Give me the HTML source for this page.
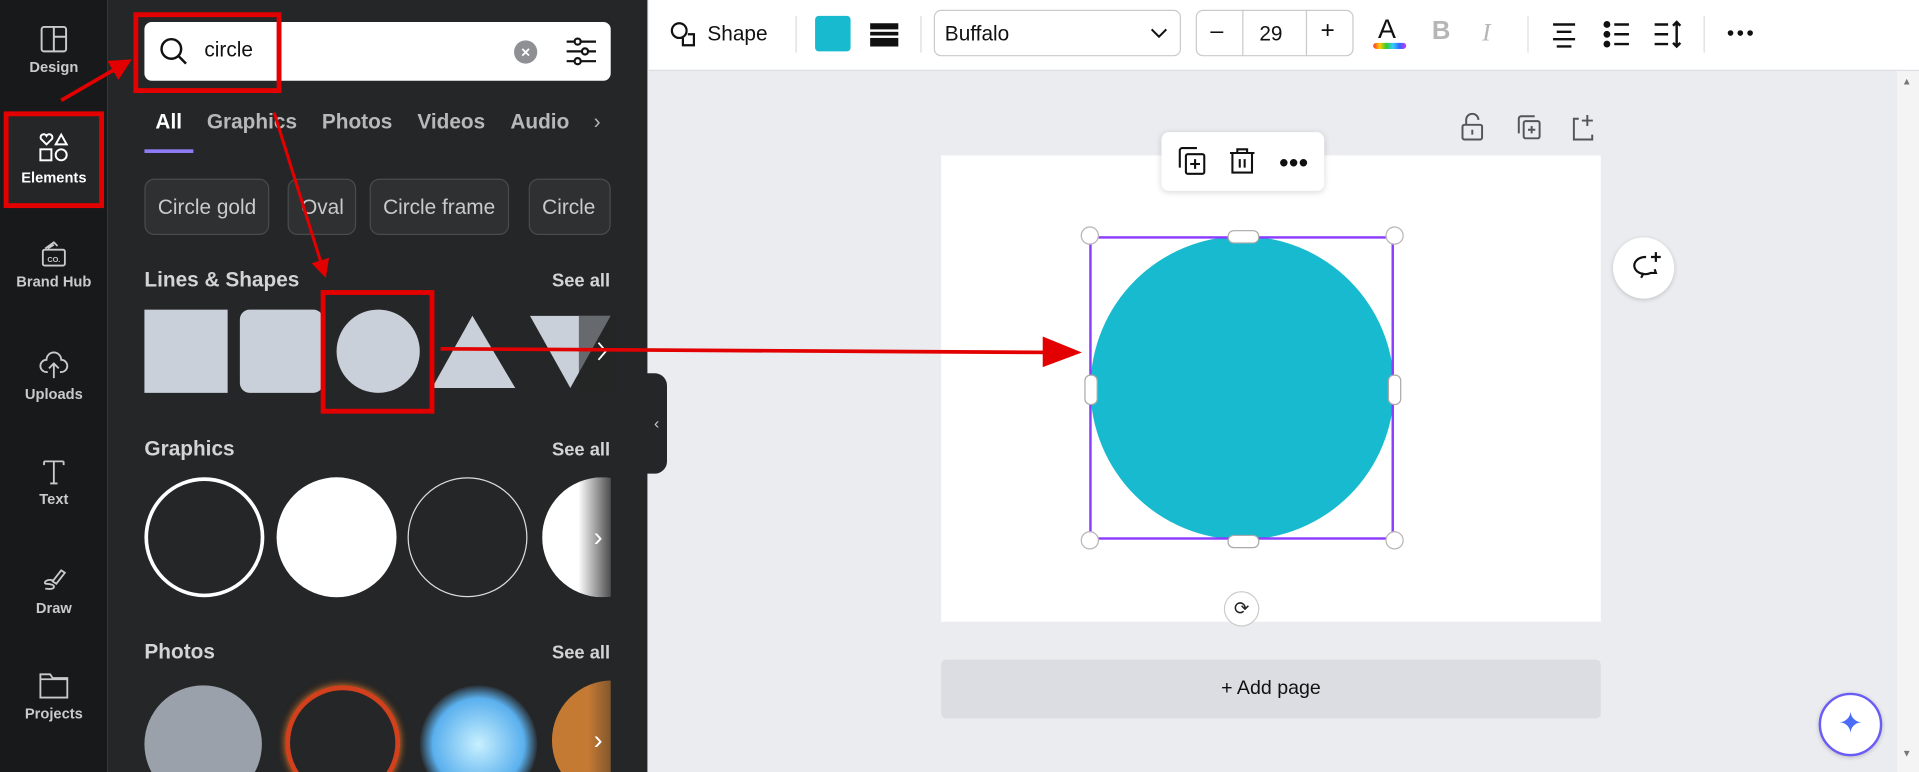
<!DOCTYPE html>
<html><head><meta charset="utf-8">
<style>
html,body{margin:0;padding:0;width:1919px;height:772px;overflow:hidden;background:#ebecf0;font-family:"Liberation Sans",sans-serif}
#w{position:absolute;left:0;top:0;width:1568px;height:631px;transform:scale(1.22385);transform-origin:0 0;background:#ebecf0;overflow:hidden}
.a{position:absolute}
.rail{left:0;top:0;width:88px;height:631px;background:#18191b}
.ri{position:absolute;left:0;width:88px;text-align:center;color:#c9cacc;font-size:12px;font-weight:bold}
.ri svg{display:block;margin:0 auto 4px}
.panel{left:88px;top:0;width:441px;height:631px;background:#252627;overflow:hidden}
.tab{position:absolute;top:90px;font-size:17px;font-weight:bold;color:#b7b8ba}
.chip{position:absolute;top:146px;height:46px;border:1px solid #4a4b4d;border-radius:8px;background:#2f3031;color:#c9cacc;font-size:17px;line-height:46px;padding:0 10px;box-sizing:border-box}
.h{position:absolute;font-size:17px;font-weight:bold;color:#d3d4d6}
.see{position:absolute;font-size:15px;font-weight:bold;color:#d3d4d6}
.sh{position:absolute;background:#c9d0d9}
.red{position:absolute;border:4px solid #e20000;box-sizing:border-box}
.tb{left:530px;top:0;width:1038px;height:57px;background:#fff;border-bottom:1px solid #dcdde0}
.sep{position:absolute;top:13px;width:1px;height:30px;background:#dcdde0}
.hd{position:absolute;width:15px;height:15px;border-radius:50%;background:#fff;border:1px solid #b5b5b5;box-sizing:border-box}
</style></head><body><div id="w">
<div class="a rail">
 <div class="ri" style="top:20px"><svg width="24" height="24" viewBox="0 0 24 24" fill="none" stroke="#c9cacc" stroke-width="1.6"><rect x="2" y="2" width="20" height="20" rx="2"/><path d="M12 2v20M12 10h10"/></svg>Design</div>
 <div style="position:absolute;left:4px;top:92px;width:80px;height:76px;background:#252627"></div>
 <div class="ri" style="top:108px;color:#fff"><svg width="26" height="26" viewBox="0 0 26 26" fill="none" stroke="#fff" stroke-width="1.6"><path d="M7 10 L2.5 5.5 A2.3 2.3 0 0 1 7 3 A2.3 2.3 0 0 1 11.5 5.5Z"/><path d="M19 2 L23.5 10 H14.5Z"/><rect x="2" y="14" width="9" height="9"/><circle cx="19" cy="18.5" r="4.5"/></svg>Elements</div>
 <div class="red" style="left:3px;top:91px;width:82px;height:79px"></div>
 <div class="ri" style="top:195px"><svg width="24" height="24" viewBox="0 0 24 24" fill="none" stroke="#c9cacc" stroke-width="1.5"><rect x="3" y="9" width="18" height="13" rx="1.5"/><path d="M5 8l7-5 3 3M7 8l5-3"/><text x="12" y="19" font-size="6" fill="#c9cacc" stroke="none" text-anchor="middle" font-family="Liberation Sans" font-weight="bold">CO.</text></svg>Brand Hub</div>
 <div class="ri" style="top:285px"><svg width="26" height="26" viewBox="0 0 26 26" fill="none" stroke="#c9cacc" stroke-width="1.5"><path d="M8 19H7a5 5 0 0 1 0-10 6 6 0 0 1 12 0 5 5 0 0 1 0 10h-1"/><path d="M13 24V13M9 16l4-4 4 4"/></svg>Uploads</div>
 <div class="ri" style="top:373px"><svg width="24" height="24" viewBox="0 0 24 24" fill="none" stroke="#c9cacc" stroke-width="1.5"><path d="M4 4h16M12 4v18M9 22h6M4 4v3M20 4v3"/></svg>Text</div>
 <div class="ri" style="top:460px"><svg width="24" height="26" viewBox="0 0 24 26" fill="none" stroke="#c9cacc" stroke-width="1.5"><path d="M11 15l7-9 3 2-7 9z"/><path d="M11 14C5 13 3 17 6 17s7 1 6 3-6 1-7 1"/></svg>Draw</div>
 <div class="ri" style="top:548px"><svg width="26" height="24" viewBox="0 0 26 24" fill="none" stroke="#c9cacc" stroke-width="1.5"><path d="M2 3h8l2 3h12v16H2z M2 7h22"/></svg>Projects</div>
</div>
<div class="a panel">
 <div style="position:absolute;left:30px;top:18px;width:381px;height:48px;background:#fff;border-radius:6px"></div>
 <svg style="position:absolute;left:41px;top:29px" width="26" height="26" viewBox="0 0 26 26" fill="none" stroke="#111" stroke-width="2"><circle cx="11" cy="11" r="8"/><path d="M17 17l6 6"/></svg>
 <div style="position:absolute;left:79px;top:31px;font-size:17px;color:#111">circle</div>
 <div style="position:absolute;left:332px;top:33px;width:19px;height:19px;border-radius:50%;background:#8e9094;color:#fff;font-size:13px;text-align:center;line-height:19px;font-weight:bold">×</div>
 <svg style="position:absolute;left:374px;top:30px" width="26" height="24" viewBox="0 0 26 24" fill="none" stroke="#111" stroke-width="1.8"><path d="M1 4h24M1 12h24M1 20h24"/><circle cx="10" cy="4" r="2.5" fill="#fff"/><circle cx="16" cy="12" r="2.5" fill="#fff"/><circle cx="10" cy="20" r="2.5" fill="#fff"/></svg>
 <div class="tab" style="left:39px;color:#fff">All</div>
 <div class="tab" style="left:81px">Graphics</div>
 <div class="tab" style="left:175px">Photos</div>
 <div class="tab" style="left:253px">Videos</div>
 <div class="tab" style="left:329px">Audio</div>
 <div class="tab" style="left:397px;font-weight:normal">›</div>
 <div style="position:absolute;left:30px;top:122px;width:40px;height:3px;background:#8b7cf6"></div>
 <div class="chip" style="left:30px">Circle gold</div>
 <div class="chip" style="left:147px;width:56px">Oval</div>
 <div class="chip" style="left:214px">Circle frame</div>
 <div class="chip" style="left:344px;width:67px;overflow:hidden">Circle ›</div>
 <div class="h" style="left:30px;top:219px">Lines &amp; Shapes</div><div class="see" style="top:221px;left:363px">See all</div>
 <div class="sh" style="left:30px;top:253px;width:68px;height:68px"></div>
 <div class="sh" style="left:108px;top:253px;width:68px;height:68px;border-radius:8px"></div>
 <div class="sh" style="left:187px;top:253px;width:68px;height:68px;border-radius:50%"></div>
 <svg style="position:absolute;left:265px;top:258px" width="150" height="62"><polygon points="33,0 68,59 0,59" fill="#c9d0d9"/><polygon points="80,0 146,0 113,59" fill="#c9d0d9"/><rect x="120" y="0" width="30" height="62" fill="#252627" opacity=".6"/><path d="M136 22l6 7-6 7" stroke="#fff" stroke-width="1.5" fill="none"/></svg>
 <div class="h" style="left:30px;top:357px">Graphics</div><div class="see" style="top:359px;left:363px">See all</div>
 <div style="position:absolute;left:30px;top:390px;width:98px;height:98px;border:3px solid #fff;border-radius:50%;box-sizing:border-box"></div>
 <div style="position:absolute;left:138px;top:390px;width:98px;height:98px;background:#fff;border-radius:50%"></div>
 <div style="position:absolute;left:245px;top:390px;width:98px;height:98px;border:1px solid #ddd;border-radius:50%;box-sizing:border-box"></div>
 <div style="position:absolute;left:355px;top:390px;width:56px;height:98px;overflow:hidden"><div style="width:98px;height:98px;border-radius:50%;background:linear-gradient(90deg,#fff 30%,#555 56%)"></div></div>
 <div style="position:absolute;left:397px;top:426px;color:#fff;font-size:22px">›</div>
 <div class="h" style="left:30px;top:523px">Photos</div><div class="see" style="top:525px;left:363px">See all</div>
 <div style="position:absolute;left:30px;top:560px;width:96px;height:96px;border-radius:50%;background:#9aa1ab"></div>
 <div style="position:absolute;left:145px;top:560px;width:86px;height:86px;border-radius:50%;border:4px solid #d2401e;box-shadow:0 0 6px #f07a20"></div>
 <div style="position:absolute;left:255px;top:560px;width:96px;height:96px;border-radius:50%;background:radial-gradient(#c8f0ff,#5ab0ee 55%,#252627 72%)"></div>
 <div style="position:absolute;left:363px;top:556px;width:48px;height:80px;overflow:hidden"><div style="width:98px;height:98px;border-radius:50%;background:linear-gradient(90deg,#c57a34 30%,#6a4a2a 56%)"></div></div>
 <div style="position:absolute;left:397px;top:592px;color:#fff;font-size:22px">›</div>
</div>
<div class="a" style="left:528px;top:305px;width:17px;height:82px;background:#252627;border-radius:0 10px 10px 0;color:#ccc;font-size:13px;line-height:82px;text-align:center">‹</div>
<div class="a tb">
 <svg style="position:absolute;left:17px;top:17px" width="22" height="22" viewBox="0 0 22 22" fill="none" stroke="#111" stroke-width="1.8"><circle cx="8" cy="8" r="6"/><path d="M11 14v6h9v-9h-5"/></svg>
 <div style="position:absolute;left:48px;top:18px;font-size:17px;color:#111">Shape</div>
 <div class="sep" style="left:120px"></div>
 <div style="position:absolute;left:136px;top:13px;width:29px;height:29px;background:#17bace;border-radius:3px"></div>
 <div style="position:absolute;left:181px;top:19px;width:23px;height:5px;background:#111"></div><div style="position:absolute;left:181px;top:26px;width:23px;height:3px;background:#111"></div><div style="position:absolute;left:181px;top:31px;width:23px;height:7px;background:#111"></div>
 <div class="sep" style="left:222px"></div>
 <div style="position:absolute;left:233px;top:8px;width:202px;height:38px;border:1px solid #c9cacc;border-radius:6px;box-sizing:border-box"></div>
 <div style="position:absolute;left:242px;top:18px;font-size:17px;color:#111">Buffalo</div>
 <svg style="position:absolute;left:410px;top:23px" width="14" height="9"><path d="M1 1l6 6 6-6" stroke="#111" stroke-width="1.6" fill="none"/></svg>
 <div style="position:absolute;left:447px;top:8px;width:129px;height:38px;border:1px solid #c9cacc;border-radius:6px;box-sizing:border-box"></div>
 <div style="position:absolute;left:485px;top:8px;width:1px;height:38px;background:#c9cacc"></div><div style="position:absolute;left:537px;top:8px;width:1px;height:38px;background:#c9cacc"></div>
 <div style="position:absolute;left:459px;top:15px;font-size:19px;color:#111">–</div>
 <div style="position:absolute;left:499px;top:18px;font-size:17px;color:#111">29</div>
 <div style="position:absolute;left:549px;top:14px;font-size:20px;color:#111">+</div>
 <div style="position:absolute;left:596px;top:11px;font-size:22px;color:#111">A</div>
 <div style="position:absolute;left:592px;top:35px;width:27px;height:5px;border-radius:3px;background:linear-gradient(90deg,#f33,#fc0,#3c3,#3cf,#36f,#c3f)"></div>
 <div style="position:absolute;left:640px;top:14px;font-size:21px;font-weight:bold;color:#b5b6b8">B</div>
 <div style="position:absolute;left:681px;top:14px;font-size:21px;font-style:italic;font-family:'Liberation Serif';color:#b5b6b8">I</div>
 <div class="sep" style="left:718px"></div>
 <svg style="position:absolute;left:737px;top:17px" width="22" height="22" stroke="#111" stroke-width="2"><path d="M2 3h18M5 9h12M2 15h18M5 21h12"/></svg>
 <svg style="position:absolute;left:780px;top:17px" width="22" height="22" stroke="#111" stroke-width="2"><circle cx="3" cy="3" r="1.8" fill="#111"/><circle cx="3" cy="11" r="1.8" fill="#111"/><circle cx="3" cy="19" r="1.8" fill="#111"/><path d="M9 3h12M9 11h12M9 19h12"/></svg>
 <svg style="position:absolute;left:821px;top:16px" width="24" height="24" stroke="#111" stroke-width="2" fill="none"><path d="M1 4h11M1 12h11M1 20h11M19 2v20M16 5l3-3 3 3M16 19l3 3 3-3"/></svg>
 <div class="sep" style="left:862px"></div>
 <svg style="position:absolute;left:880px;top:22px" width="26" height="10"><circle cx="4" cy="5" r="2.3" fill="#111"/><circle cx="12" cy="5" r="2.3" fill="#111"/><circle cx="20" cy="5" r="2.3" fill="#111"/></svg>
</div>
<div class="a" style="left:1550px;top:58px;width:18px;height:573px;background:#f4f4f5"></div>
<div class="a" style="left:1554px;top:62px;font-size:8px;color:#777">▲</div>
<div class="a" style="left:1554px;top:611px;font-size:8px;color:#777">▼</div>
<svg class="a" style="left:1193px;top:92px" width="110" height="24" fill="none" stroke="#555" stroke-width="1.6"><rect x="2" y="10" width="16" height="12" rx="1.5"/><path d="M5 10V6a5 5 0 0 1 10 0"/><path d="M10 14v4"/><rect x="52" y="7" width="13" height="14" rx="1.5"/><path d="M48 17V5a2 2 0 0 1 2-2h11M58.5 11v6M55.5 14h6"/><path d="M97 5H93v17h15v-4M104 2v9M99.5 6.5h9"/></svg>
<div class="a" style="left:769px;top:127px;width:539px;height:381px;background:#fff"></div>
<div class="a" style="left:949px;top:108px;width:133px;height:48px;background:#fff;border-radius:6px;box-shadow:0 1px 5px rgba(0,0,0,.15)"></div>
<svg class="a" style="left:961px;top:118px" width="110" height="28" fill="none" stroke="#111" stroke-width="1.7"><rect x="8" y="8" width="15" height="16" rx="1.5"/><path d="M3 19V5a2 2 0 0 1 2-2h12M15.5 12v8M11.5 16h8"/><path d="M44 7h20M50 7V4h8v3M46 7v16h16V7M52 12v7M56 12v7"/><circle cx="88" cy="15" r="2.2" fill="#111"/><circle cx="96" cy="15" r="2.2" fill="#111"/><circle cx="104" cy="15" r="2.2" fill="#111"/></svg>
<div class="a" style="left:891px;top:193px;width:248px;height:248px;background:#17bace;border-radius:50%"></div>
<div class="a" style="left:890px;top:193px;width:249px;height:248px;border:2px solid #8b3dff;box-sizing:border-box"></div>
<div class="hd" style="left:883px;top:185px"></div><div class="hd" style="left:1132px;top:185px"></div><div class="hd" style="left:883px;top:434px"></div><div class="hd" style="left:1132px;top:434px"></div>
<div class="a" style="left:1003px;top:188px;width:24px;height:9px;border-radius:5px;background:#fff;border:1px solid #aaa"></div>
<div class="a" style="left:1003px;top:437px;width:24px;height:9px;border-radius:5px;background:#fff;border:1px solid #aaa"></div>
<div class="a" style="left:886px;top:306px;width:9px;height:23px;border-radius:5px;background:#fff;border:1px solid #aaa"></div>
<div class="a" style="left:1134px;top:306px;width:9px;height:23px;border-radius:5px;background:#fff;border:1px solid #aaa"></div>
<div class="a" style="left:1000px;top:483px;width:29px;height:29px;border-radius:50%;background:#fff;border:1px solid #ccc;box-sizing:border-box;text-align:center;line-height:27px;font-size:15px;color:#222">⟳</div>
<div class="a" style="left:1318px;top:194px;width:50px;height:50px;border-radius:50%;background:#fff;box-shadow:0 1px 4px rgba(0,0,0,.18)"></div>
<svg class="a" style="left:1331px;top:205px" width="28" height="28" fill="none" stroke="#111" stroke-width="1.8"><path d="M14 5a9 7 0 1 0 4 13l4 0-1-3M10 22l2-4"/><path d="M22 1v8M18 5h8"/></svg>
<div class="a" style="left:769px;top:539px;width:539px;height:48px;background:#dcdde2;border-radius:4px;text-align:center;line-height:48px;font-size:16px;color:#111">+ Add page</div>
<div class="a" style="left:1486px;top:566px;width:52px;height:52px;border-radius:50%;background:#fff;box-shadow:0 1px 4px rgba(0,0,0,.2);border:2px solid #6a5cf6;box-sizing:border-box;text-align:center;line-height:48px;font-size:24px;color:#4a6cf7">✦</div>
<div class="red" style="left:109px;top:10px;width:121px;height:66px"></div>
<div class="red" style="left:262px;top:237px;width:93px;height:101px"></div>
<svg class="a" style="left:0;top:0" width="1568" height="631">
<defs><marker id="m" markerWidth="6" markerHeight="6" refX="3" refY="3" orient="auto"><path d="M0 0L6 3L0 6Z" fill="#e20000"/></marker></defs>
<path d="M50 82L100 53" stroke="#e20000" stroke-width="3" marker-end="url(#m)"/>
<path d="M224 92L264 220" stroke="#e20000" stroke-width="2.5" marker-end="url(#m)"/>
<path d="M360 285L860 288" stroke="#e20000" stroke-width="3"/>
<path d="M852 275L884 288L852 300Z" fill="#e20000"/>
</svg>
</div></body></html>
